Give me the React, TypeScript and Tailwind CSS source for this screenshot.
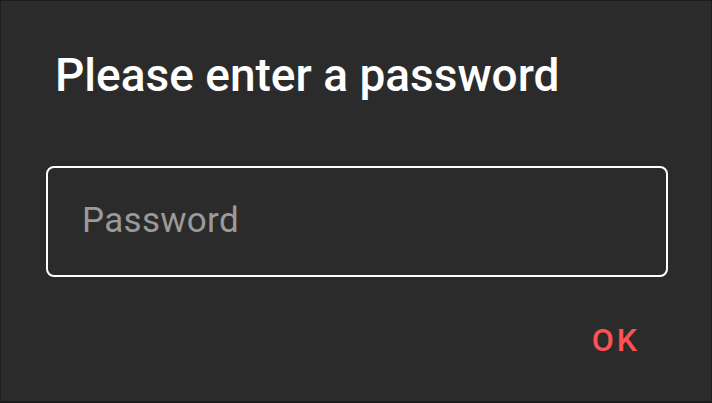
export default function App() {
  return (
    <div className="w-[712px] h-[403px] bg-[#1c1c1c] p-px pb-[2px]" style={{ fontFamily: "Roboto, 'Noto Sans', sans-serif" }}>
      <div className="w-full h-full bg-[#2b2b2b] flex flex-col pl-[45px] pr-[43px]">
        <h1 className="mt-[49px] ml-[9px] text-[46px] leading-[50px] font-medium text-white tracking-[0px]">
          Please enter a password
        </h1>
        <div className="mt-[66px] h-[111px] border-2 border-white rounded-[8px] flex items-center pl-[34px]">
          <span className="text-[35px] tracking-[0.3px] text-[#9a9a9a]">Password</span>
        </div>
        <div className="flex justify-end mt-[45px] pr-[28px]">
          <span className="text-[32px] leading-[36px] font-medium text-[#ff5252] tracking-[3px]">OK</span>
        </div>
      </div>
    </div>
  );
}
